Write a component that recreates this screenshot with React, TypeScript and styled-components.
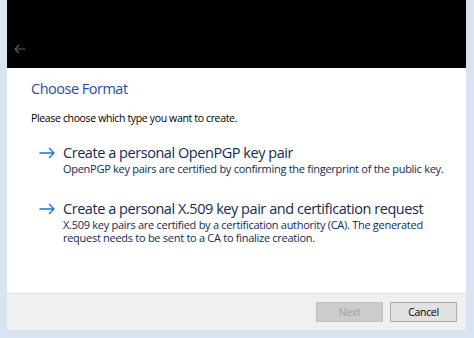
import { ReactElement } from 'react';
import styled, { createGlobalStyle } from 'styled-components';

const GlobalStyle = createGlobalStyle`
  html, body {
    margin: 0;
    padding: 0;
    background: #ffffff;
  }
  body {
    font-family: 'Open Sans', 'Noto Sans', sans-serif;
  }
`;

const Frame = styled.div`
  width: 474px;
  height: 338px;
  box-sizing: border-box;
  display: flex;
  flex-direction: column;
  border-left: 7px solid #d8e4f2;
  border-right: 8px solid #d8e4f2;
  border-bottom: 8px solid #d8e4f2;
  background: #ffffff;
`;

const Header = styled.div`
  height: 68px;
  background: #000000;
  display: flex;
  align-items: flex-end;
  padding: 0 0 13px 7px;
  box-sizing: border-box;
`;

const BackButton = styled.div`
  width: 12px;
  height: 12px;
  display: flex;
  align-items: center;
  justify-content: center;
`;

const Content = styled.div`
  flex: 1;
  padding: 11px 6px 0 24px;
  display: flex;
  flex-direction: column;
`;

const Heading = styled.div`
  font-size: 14.5px;
  line-height: 20px;
  color: #1f4e9f;
  letter-spacing: -0.5px;
`;

const Instruction = styled.div`
  margin-top: 11px;
  font-size: 10.5px;
  line-height: 16px;
  color: #000000;
  letter-spacing: -0.35px;
`;

const LinkList = styled.div`
  margin-top: 18px;
  display: flex;
  flex-direction: column;
  gap: 25px;
  padding-left: 8px;
`;

const CommandLink = styled.div`
  display: grid;
  grid-template-columns: 16px 1fr;
  column-gap: 8px;
  cursor: pointer;
`;

const ArrowBox = styled.div`
  height: 18px;
  display: flex;
  align-items: center;
`;

const LinkTitle = styled.div`
  font-size: 14.5px;
  line-height: 18px;
  color: #142b52;
  letter-spacing: -0.45px;
  white-space: nowrap;
`;

const LinkDesc = styled.div`
  grid-column: 2;
  font-size: 11px;
  line-height: 13px;
  color: #142b52;
  letter-spacing: -0.28px;
  max-width: 392px;
`;

const Footer = styled.div`
  height: 37px;
  box-sizing: border-box;
  border-top: 1px solid #dfdfdf;
  background: #f0f0f0;
  display: flex;
  align-items: center;
  justify-content: flex-end;
  gap: 7px;
  padding-right: 9px;
`;

const Button = styled.button<{ $disabled?: boolean }>`
  width: 67px;
  height: 20px;
  box-sizing: border-box;
  padding: 0;
  font-family: 'Open Sans', 'Noto Sans', sans-serif;
  font-size: 10.5px;
  letter-spacing: -0.3px;
  border: 1px solid ${(p) => (p.$disabled ? '#bfbfbf' : '#adadad')};
  background: ${(p) => (p.$disabled ? '#cccccc' : '#e1e1e1')};
  color: ${(p) => (p.$disabled ? '#a0a0a0' : '#000000')};
`;

function Arrow(): ReactElement {
  return (
    <svg width="16" height="12" viewBox="0 0 16 12" fill="none">
      <path d="M0.5 6H15M10 1L15 6L10 11" stroke="#1a6fd4" strokeWidth="1.3" />
    </svg>
  );
}

const links = [
  {
    title: 'Create a personal OpenPGP key pair',
    desc: 'OpenPGP key pairs are certified by confirming the fingerprint of the public key.',
  },
  {
    title: 'Create a personal X.509 key pair and certification request',
    desc: 'X.509 key pairs are certified by a certification authority (CA). The generated request needs to be sent to a CA to finalize creation.',
  },
];

function App(): ReactElement {
  return (
    <>
      <GlobalStyle />
      <Frame>
        <Header>
          <BackButton>
            <svg width="12" height="10" viewBox="0 0 12 10" fill="none">
              <path d="M11.5 5H1M5 1L1 5L5 9" stroke="#5a5a5a" strokeWidth="1.2" />
            </svg>
          </BackButton>
        </Header>
        <Content>
          <Heading>Choose Format</Heading>
          <Instruction>Please choose which type you want to create.</Instruction>
          <LinkList>
            {links.map((l) => (
              <CommandLink key={l.title}>
                <ArrowBox>
                  <Arrow />
                </ArrowBox>
                <LinkTitle>{l.title}</LinkTitle>
                <LinkDesc>{l.desc}</LinkDesc>
              </CommandLink>
            ))}
          </LinkList>
        </Content>
        <Footer>
          <Button $disabled disabled>
            Next
          </Button>
          <Button>Cancel</Button>
        </Footer>
      </Frame>
    </>
  );
}

export default App;
